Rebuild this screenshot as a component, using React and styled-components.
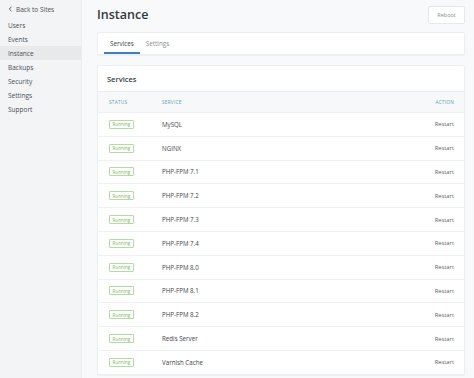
import React from "react";
import styled, { createGlobalStyle } from "styled-components";

const Global = createGlobalStyle`
  html, body { margin: 0; padding: 0; background: #f8f9fa; }
  body { font-family: "Open Sans", "Liberation Sans", sans-serif; color: #3a3f44; }
  * { box-sizing: border-box; }
`;

const Layout = styled.div`
  display: grid;
  grid-template-columns: 82px 1fr;
  min-height: 378px;
`;

const Sidebar = styled.aside`
  background: #f3f4f5;
  border-right: 1px solid #eceef0;
  padding-top: 2px;
  display: flex;
  flex-direction: column;
`;

const BackLink = styled.a`
  display: flex;
  align-items: center;
  gap: 3px;
  height: 14px;
  padding-left: 8px;
  margin-bottom: 2px;
  font-size: 6.5px;
  color: #4a4f55;
  text-decoration: none;
`;

const NavItem = styled.a`
  display: flex;
  align-items: center;
  height: 14px;
  padding-left: 8px;
  font-size: 6.5px;
  color: #4a4f55;
  text-decoration: none;
  background: ${(p) => (p.$active ? "#e8e9eb" : "transparent")};
`;

const Main = styled.main`
  padding: 6px 9px 2px 15px;
  display: flex;
  flex-direction: column;
`;

const Header = styled.div`
  display: flex;
  justify-content: space-between;
  align-items: center;
  height: 18px;
`;

const Title = styled.h1`
  margin: 0;
  font-size: 12.5px;
  font-weight: 600;
  color: #33383d;
  line-height: 18px;
`;

const Button = styled.button`
  width: 37px;
  height: 18px;
  background: #fff;
  border: 1px solid #e6e8ea;
  border-radius: 2px;
  font-family: inherit;
  font-size: 5.5px;
  color: #888d92;
  padding: 0;
`;

const Card = styled.section`
  background: #fff;
  border: 1px solid #eceef0;
  border-radius: 2px;
  box-shadow: 0 1px 1px rgba(0, 0, 0, 0.04);
  margin-top: ${(p) => p.$mt || 0}px;
`;

const Tabs = styled.nav`
  display: flex;
  height: 21px;
  padding-left: 6px;
`;

const Tab = styled.a`
  display: flex;
  align-items: center;
  padding: 2px 6px 0;
  font-size: 6.3px;
  color: ${(p) => (p.$active ? "#3a3f44" : "#8a8f94")};
  border-bottom: 2px solid ${(p) => (p.$active ? "#3f7fbf" : "transparent")};
`;

const CardTitle = styled.h2`
  margin: 0;
  height: 26px;
  display: flex;
  align-items: center;
  padding-left: 9px;
  padding-top: 1px;
  font-size: 7.5px;
  font-weight: 600;
  color: #3a3f44;
  border-bottom: 1px solid #eceef0;
`;

const Row = styled.div`
  display: grid;
  grid-template-columns: 53px 1fr auto;
  align-items: center;
  height: ${(p) => (p.$head ? 20 : 23.8)}px;
  padding: 0 10px 0 11px;
  background: ${(p) => (p.$head ? "#f7f8f9" : "#fff")};
  border-top: ${(p) => (p.$head ? "none" : "1px solid #f0f1f3")};
`;

const HeadCell = styled.span`
  font-size: 4.8px;
  letter-spacing: 0.2px;
  text-transform: uppercase;
  color: #5f9eae;
  text-align: ${(p) => (p.$right ? "right" : "left")};
`;

const Badge = styled.span`
  justify-self: start;
  display: inline-flex;
  align-items: center;
  justify-content: center;
  width: 25px;
  height: 9px;
  border: 1px solid #b4dca2;
  border-radius: 1px;
  font-size: 4.6px;
  color: #79b862;
`;

const ServiceName = styled.span`
  font-size: 6.2px;
  color: #3f444a;
`;

const Action = styled.a`
  font-size: 5.8px;
  color: #5a5f64;
  text-align: right;
`;

const services = [
  "MySQL",
  "NGINX",
  "PHP-FPM 7.1",
  "PHP-FPM 7.2",
  "PHP-FPM 7.3",
  "PHP-FPM 7.4",
  "PHP-FPM 8.0",
  "PHP-FPM 8.1",
  "PHP-FPM 8.2",
  "Redis Server",
  "Varnish Cache",
];

const nav = ["Users", "Events", "Instance", "Backups", "Security", "Settings", "Support"];

export default function App() {
  return (
    <>
      <Global />
      <Layout>
        <Sidebar>
          <BackLink>
            <svg width="5" height="6" viewBox="0 0 5 6">
              <path d="M3.5 0.8 L1.3 3 L3.5 5.2" stroke="#4a4f55" strokeWidth="0.9" fill="none" />
            </svg>
            Back to Sites
          </BackLink>
          {nav.map((n) => (
            <NavItem key={n} $active={n === "Instance"}>
              {n}
            </NavItem>
          ))}
        </Sidebar>
        <Main>
          <Header>
            <Title>Instance</Title>
            <Button>Reboot</Button>
          </Header>
          <Card $mt={8}>
            <Tabs>
              <Tab $active>Services</Tab>
              <Tab>Settings</Tab>
            </Tabs>
          </Card>
          <Card $mt={10}>
            <CardTitle>Services</CardTitle>
            <Row $head>
              <HeadCell>Status</HeadCell>
              <HeadCell>Service</HeadCell>
              <HeadCell $right>Action</HeadCell>
            </Row>
            {services.map((s) => (
              <Row key={s}>
                <Badge>Running</Badge>
                <ServiceName>{s}</ServiceName>
                <Action>Restart</Action>
              </Row>
            ))}
          </Card>
        </Main>
      </Layout>
    </>
  );
}
